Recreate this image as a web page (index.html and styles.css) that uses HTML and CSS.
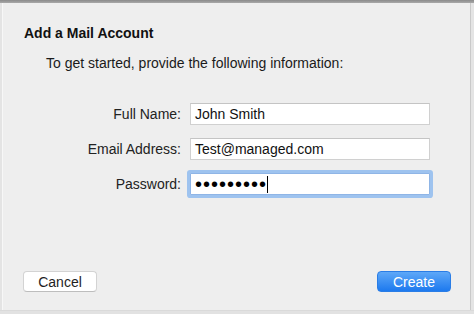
FILE: index.html
```html
<!DOCTYPE html>
<html lang="en">
<head>
  <meta charset="UTF-8">
  <title>Add a Mail Account</title>
  <link rel="stylesheet" href="styles.css">
</head>
<body>
  <div class="topbar"></div>
  <div class="window">
    <div class="sheet">
      <h1>Add a Mail Account</h1>
      <p class="intro">To get started, provide the following information:</p>

      <div class="fields">
        <label for="fullName">Full Name:</label>
        <div class="field">John Smith</div>

        <label for="email">Email Address:</label>
        <div class="field">Test@managed.com</div>

        <label for="password">Password:</label>
        <div class="field focused"><span class="dots">&#8226;&#8226;&#8226;&#8226;&#8226;&#8226;&#8226;&#8226;&#8226;</span><span class="caret"></span></div>
      </div>

      <div class="actions">
        <button class="btn">Cancel</button>
        <button class="btn primary">Create</button>
      </div>
    </div>
    <div class="edge"></div>
  </div>
  <div class="bottom"></div>
</body>
</html>
```

FILE: styles.css
```css
body {
  margin: 0;
  background-color: #e4e4e4;
  font-family: 'Liberation Sans', Arial, sans-serif;
  font-size: 14px;
  color: #1e1e1e;
  width: 474px;
  height: 314px;
  overflow: hidden;
}

.topbar {
  height: 3px;
  background: linear-gradient(#8a8a8a, #a9a9a9);
}

.window {
  display: flex;
  height: 307px;
}

.sheet {
  width: 468px;
  margin-left: 2px;
  border-left: 1px solid #f7f7f7;
  background-color: #eeeeee;
  display: flex;
  flex-direction: column;
  padding: 22px 0 18px 0;
  box-sizing: border-box;
}

.edge {
  width: 1px;
  background-color: #c9c9c9;
}

.sheet h1 {
  font-size: 14px;
  font-weight: bold;
  line-height: 17px;
  margin: 0 0 13px 21px;
  color: #111;
}

.intro {
  margin: 0 0 31px 43px;
  line-height: 17px;
  color: #1a1a1a;
}

.fields {
  display: grid;
  grid-template-columns: 178px 240px;
  column-gap: 9px;
  row-gap: 13px;
  align-items: center;
}

.fields label {
  text-align: right;
  color: #222;
}

.field {
  height: 22px;
  box-sizing: border-box;
  background: #fff;
  border: 1px solid #d0d0d0;
  border-top-color: #c4c4c4;
  padding: 0 4px;
  line-height: 20px;
  color: #111;
  display: flex;
  align-items: center;
}

.field.focused {
  border-color: #8fb5e6;
  box-shadow: 0 0 0 3px #9ec3ef;
  border-radius: 1px;
}

.dots {
  font-size: 20px;
  line-height: 20px;
  letter-spacing: 1px;
  color: #000;
}

.caret {
  width: 1px;
  height: 17px;
  background: #000;
  margin-left: 0;
}

.actions {
  margin-top: auto;
  display: flex;
  justify-content: space-between;
  padding: 0 19px 0 20px;
}

.btn {
  width: 74px;
  height: 21px;
  padding: 0;
  font-family: inherit;
  font-size: 14px;
  color: #1e1e1e;
  background: #ffffff;
  border: 1px solid #d3d3d3;
  border-bottom-color: #bdbdbd;
  border-radius: 4px;
}

.btn.primary {
  color: #fff;
  border-color: #2a7de6;
  background: linear-gradient(#5ea8f8, #1d79ee);
}

.bottom {
  height: 4px;
  border-top: 1px solid #dadada;
  background-color: #e2e2e2;
}
```
